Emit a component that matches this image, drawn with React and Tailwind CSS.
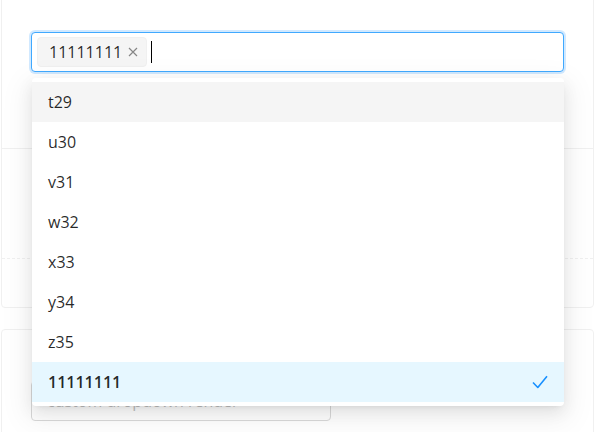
const options = ["t29", "u30", "v31", "w32", "x33", "y34", "z35", "11111111"];

const CheckIcon = () => (
  <svg width="16" height="14" viewBox="0 0 16 14" fill="none">
    <path d="M1 7.5 L5.8 12.5 L15 1.2" stroke="#1890ff" strokeWidth="1.6" strokeLinejoin="round" />
  </svg>
);

const App = () => {
  return (
    <div className="relative h-[432px] overflow-hidden bg-white text-[rgba(0,0,0,0.85)] font-['Open_Sans','Noto_Sans',sans-serif]">
      {/* first demo card */}
      <div className="-mt-2 ml-px h-[316px] border border-[#f0f0f0] rounded-b-sm">
        <div className="h-[155px] pt-[39px] pl-[29px] pr-[29px]">
          {/* focused multi select */}
          <div className="flex h-10 items-center gap-[4px] rounded-sm border border-[#40a9ff] bg-white px-[5px] shadow-[0_0_0_2px_rgba(24,144,255,0.2)]">
            <span className="flex h-[30px] items-center gap-[6px] rounded-sm border border-[#f0f0f0] bg-[#f5f5f5] pl-[11px] pr-[8px] text-base">
              11111111
              <svg width="10" height="10" viewBox="0 0 10 10" fill="none">
                <path d="M1 1 L9 9 M9 1 L1 9" stroke="rgba(0,0,0,0.45)" strokeWidth="1.2" />
              </svg>
            </span>
            <span className="h-[22px] w-px bg-black" />
          </div>
        </div>
        {/* meta */}
        <div className="h-[110px] border-t border-[#f0f0f0]" />
        <div className="h-[50px] border-t border-dashed border-[#f0f0f0]" />
      </div>

      {/* second demo card */}
      <div className="mt-[21px] ml-px h-[140px] border border-[#f0f0f0] rounded-t-sm pt-[51px] pl-[29px]">
        <div className="flex h-10 w-[300px] items-center justify-between rounded-sm border border-[#d9d9d9] px-[15px] text-base text-[#bfbfbf]">
          <span>custom dropdown render</span>
          <svg width="12" height="12" viewBox="0 0 12 12" fill="none">
            <path d="M2 4 L6 8 L10 4" stroke="#bfbfbf" strokeWidth="1.3" />
          </svg>
        </div>
      </div>

      {/* dropdown */}
      <div className="absolute left-[32px] top-[78px] w-[532px] rounded-sm bg-white py-1 shadow-[0_3px_6px_-4px_rgba(0,0,0,0.12),0_6px_16px_0_rgba(0,0,0,0.08),0_9px_28px_8px_rgba(0,0,0,0.05)]">
        {options.map((opt, i) => {
          const selected = opt === "11111111";
          return (
            <div
              key={opt}
              className={`flex h-10 items-center justify-between px-4 text-base ${
                selected ? "bg-[#e6f7ff] font-semibold" : i === 0 ? "bg-[#f5f5f5]" : ""
              }`}
            >
              <span>{opt}</span>
              {selected && <CheckIcon />}
            </div>
          );
        })}
      </div>
    </div>
  );
};

export default App;
